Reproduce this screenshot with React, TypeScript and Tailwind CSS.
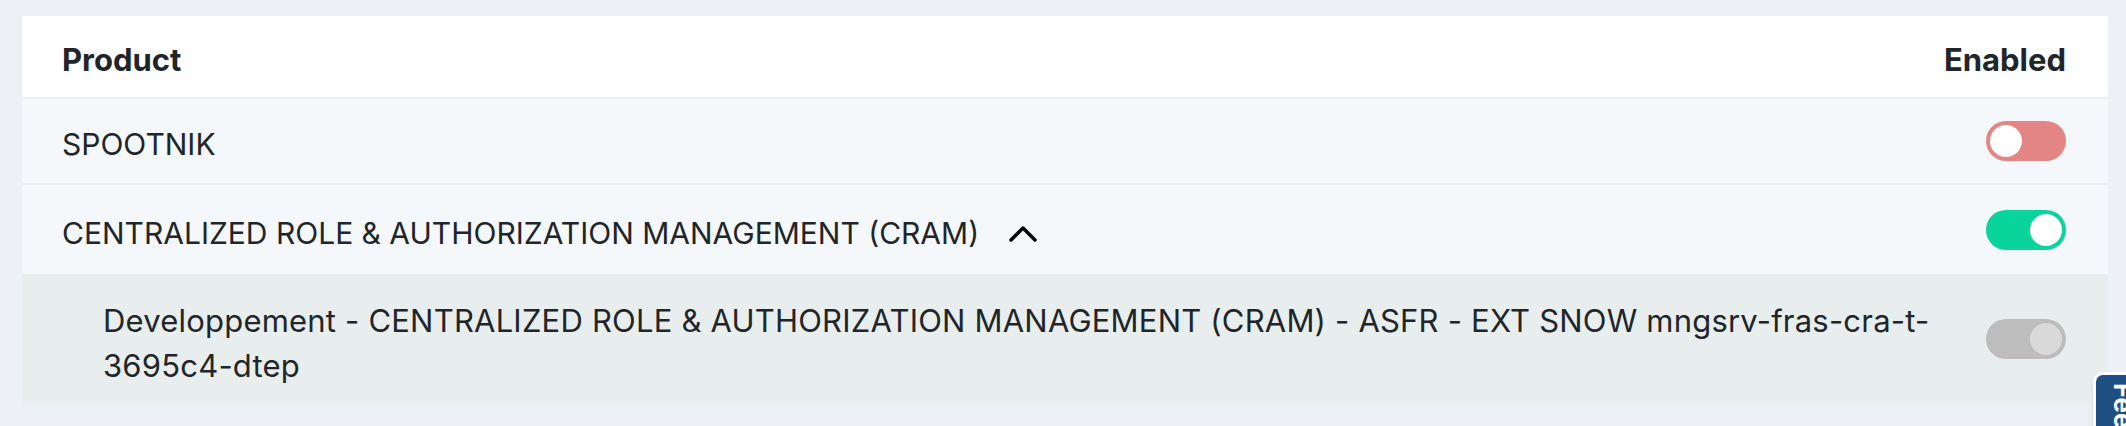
function Toggle({ state }: { state: "off" | "on" | "disabled" }) {
	const track =
		state === "on"
			? "bg-[#08d49c] justify-end"
			: state === "off"
				? "bg-[#e38585] justify-start"
				: "bg-[#bdbdbd] justify-end";
	const knob = state === "disabled" ? "bg-[#d9d9d9]" : "bg-white";
	return (
		<div className={`flex items-center w-[80px] h-[40px] rounded-full px-[4px] ${track}`}>
			<div className={`w-[32px] h-[32px] rounded-full ${knob}`}></div>
		</div>
	);
}

export default function App() {
	return (
		<div
			className="w-[2126px] h-[426px] bg-[#edf1f5] pt-[16px] pl-[22px] pr-[18px] relative overflow-hidden"
			style={{ fontFamily: "Inter, 'Liberation Sans', sans-serif" }}
		>
			<div className="flex flex-col text-[#212529] text-[30px]">
				<div className="flex items-center justify-between h-[83px] bg-white pl-[40px] pr-[42px] font-bold text-[31px] border-b-2 border-[#e9eef2]">
					<span className="pt-[7px]">Product</span>
					<span className="pt-[7px]">Enabled</span>
				</div>
				<div className="flex items-center justify-between h-[86px] bg-[#f5f8fb] pl-[40px] pr-[42px] border-b-2 border-[#e9eef2]">
					<span className="pt-[7px]">SPOOTNIK</span>
					<Toggle state="off" />
				</div>
				<div className="flex items-center justify-between h-[89px] bg-[#f5f8fb] pl-[40px] pr-[42px]">
					<div className="flex items-center gap-[30px] pt-[7px]">
						<span>CENTRALIZED ROLE &amp; AUTHORIZATION MANAGEMENT (CRAM)</span>
						<svg width="28" height="18" viewBox="0 0 28 18" fill="none">
							<path d="M2 16 L14 4 L26 16" stroke="#000" strokeWidth="3.5" strokeLinecap="round" strokeLinejoin="round" />
						</svg>
					</div>
					<Toggle state="on" />
				</div>
				<div className="flex items-center justify-between h-[130px] bg-[#e8eeee] pl-[81px] pr-[42px]">
					<span className="w-[1870px] text-[31px] tracking-[0.2px] leading-[45px] pt-[8px]">
						Developpement - CENTRALIZED ROLE &amp; AUTHORIZATION MANAGEMENT (CRAM) - ASFR - EXT SNOW mngsrv-fras-cra-t-3695c4-dtep
					</span>
					<Toggle state="disabled" />
				</div>
			</div>
			<div className="absolute left-[2093px] top-[372px] w-[60px] h-[120px] bg-[#1f4f82] border-[3px] border-white rounded-tl-[10px] shadow-md flex justify-center pt-[8px]">
				<span className="text-white font-bold text-[26px] [writing-mode:vertical-rl] leading-none">Feedback</span>
			</div>
		</div>
	);
}
